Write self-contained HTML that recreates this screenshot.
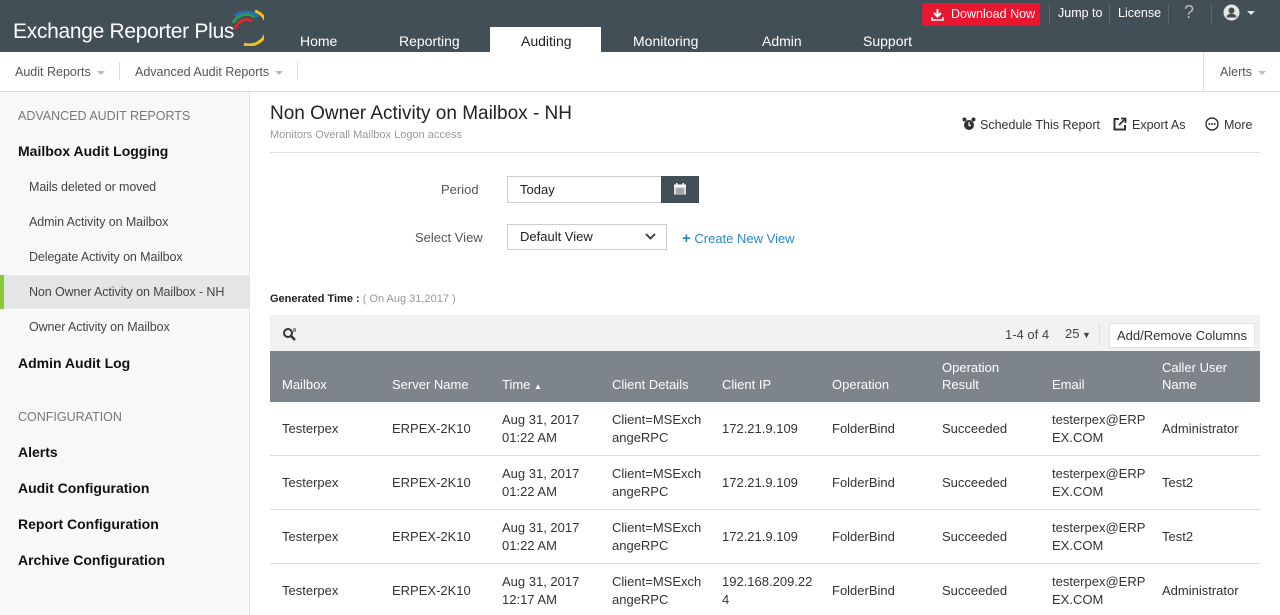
<!DOCTYPE html>
<html><head><meta charset="utf-8"><style>
*{margin:0;padding:0;box-sizing:border-box}
body{width:1280px;height:615px;overflow:hidden;background:#fff;font-family:"Liberation Sans",sans-serif;font-size:13px;color:#333;position:relative}
.a{position:absolute;white-space:nowrap}
#top{position:absolute;left:0;top:0;width:1280px;height:52px;background:#434f57}
.tab{position:absolute;top:33px;color:#fff;font-size:14px}
#sub{position:absolute;left:0;top:52px;width:1280px;height:40px;border-bottom:1px solid #dcdcdc;background:#fff}
#side{position:absolute;left:0;top:92px;width:250px;height:523px;background:#f7f8f8;border-right:1px solid #e3e3e3}
.sh{color:#777;font-size:12.5px}
.sb{color:#111;font-weight:bold;font-size:14px}
.si{color:#444;font-size:12.5px;letter-spacing:-0.1px}
.car{display:inline-block;width:0;height:0;border-left:4px solid transparent;border-right:4px solid transparent;border-top:4px solid #bbb;margin-left:6px;vertical-align:middle}
.th{position:absolute;color:#fff;font-size:13px;line-height:17px}
.td{position:absolute;color:#333;font-size:13px;line-height:18px}
.row{position:absolute;left:270px;width:990px;height:54px;border-bottom:1px solid #dcdcdc}
</style></head><body>
<div id="top"></div>
<div class="a" style="left:13px;top:20px;color:#fff;font-size:21px;letter-spacing:-0.3px">Exchange Reporter Plus</div>
<svg class="a" style="left:222px;top:8px" width="42" height="38" viewBox="0 0 42 38">
<path d="M13 21 A12 12 0 0 1 30 13" stroke="#d9262b" stroke-width="3" fill="none"/>
<path d="M11 15 A15 15 0 0 1 33 9" stroke="#2e9b48" stroke-width="3" fill="none"/>
<path d="M13 8 A17 17 0 0 1 36 9" stroke="#2470b7" stroke-width="3" fill="none"/>
<path d="M33 3 A17 17 0 0 1 22 36" stroke="#f2c31b" stroke-width="3" fill="none"/>
</svg>
<div class="tab" style="left:300px">Home</div>
<div class="tab" style="left:399px">Reporting</div>
<div class="a" style="left:490px;top:27px;width:111px;height:25px;background:#fff"></div>
<div class="tab" style="left:521px;color:#222">Auditing</div>
<div class="tab" style="left:633px">Monitoring</div>
<div class="tab" style="left:762px">Admin</div>
<div class="tab" style="left:863px">Support</div>
<div class="a" style="left:922px;top:3px;width:118px;height:23px;background:#e8162f;color:#fff;font-size:12.5px;line-height:23px;padding-left:29px">Download Now</div>
<svg class="a" style="left:931px;top:8px" width="13" height="13"><path d="M6.5 1v7M3 5l3.5 3.5L10 5" stroke="#fff" stroke-width="2" fill="none"/><path d="M1 9v3h11V9" stroke="#fff" stroke-width="1.6" fill="none"/></svg>
<div class="a" style="left:1049px;top:4px;width:1px;height:20px;background:#5a666e"></div>
<div class="a" style="left:1058px;top:6px;color:#fff;font-size:12.5px">Jump to</div>
<div class="a" style="left:1109px;top:4px;width:1px;height:20px;background:#5a666e"></div>
<div class="a" style="left:1118px;top:6px;color:#fff;font-size:12.5px">License</div>
<div class="a" style="left:1168px;top:4px;width:1px;height:20px;background:#5a666e"></div>
<div class="a" style="left:1184px;top:2px;color:#bbb;font-size:18px">?</div>
<div class="a" style="left:1211px;top:4px;width:1px;height:20px;background:#5a666e"></div>
<svg class="a" style="left:1223px;top:4px" width="34" height="17"><circle cx="8.5" cy="8.5" r="8" fill="#e6e6e6"/><circle cx="8.5" cy="6.5" r="3" fill="#434f57"/><path d="M3.5 13.5a5 4 0 0 1 10 0z" fill="#434f57"/><path d="M24 7h8l-4 4z" fill="#e6e6e6"/></svg>

<div id="sub"></div>
<div class="a" style="left:15px;top:65px;color:#555;font-size:12.5px">Audit Reports<span class="car"></span></div>
<div class="a" style="left:119px;top:62px;width:1px;height:18px;background:#ddd"></div>
<div class="a" style="left:135px;top:65px;color:#555;font-size:12.5px">Advanced Audit Reports<span class="car"></span></div>
<div class="a" style="left:297px;top:62px;width:1px;height:18px;background:#ddd"></div>
<div class="a" style="left:1203px;top:52px;width:1px;height:40px;background:#ddd"></div>
<div class="a" style="left:1220px;top:65px;color:#555;font-size:12.5px">Alerts<span class="car"></span></div>

<div id="side"></div>
<div class="a sh" style="left:18px;top:109px">ADVANCED AUDIT REPORTS</div>
<div class="a sb" style="left:18px;top:143px">Mailbox Audit Logging</div>
<div class="a si" style="left:29px;top:180px">Mails deleted or moved</div>
<div class="a si" style="left:29px;top:215px">Admin Activity on Mailbox</div>
<div class="a si" style="left:29px;top:250px">Delegate Activity on Mailbox</div>
<div class="a" style="left:0;top:275px;width:249px;height:34px;background:#e4e5e6;border-left:4px solid #8cc63f"></div>
<div class="a si" style="left:29px;top:285px">Non Owner Activity on Mailbox - NH</div>
<div class="a si" style="left:29px;top:320px">Owner Activity on Mailbox</div>
<div class="a sb" style="left:18px;top:355px">Admin Audit Log</div>
<div class="a sh" style="left:18px;top:410px">CONFIGURATION</div>
<div class="a sb" style="left:18px;top:444px">Alerts</div>
<div class="a sb" style="left:18px;top:480px">Audit Configuration</div>
<div class="a sb" style="left:18px;top:516px">Report Configuration</div>
<div class="a sb" style="left:18px;top:552px">Archive Configuration</div>

<div class="a" style="left:270px;top:103px;color:#222;font-size:19px">Non Owner Activity on Mailbox - NH</div>
<div class="a" style="left:270px;top:129px;color:#999;font-size:11px">Monitors Overall Mailbox Logon access</div>
<div class="a" style="left:270px;top:152px;width:990px;height:1px;background:#ddd"></div>
<svg class="a" style="left:962px;top:117px" width="14" height="14"><circle cx="7" cy="8" r="5" fill="#333"/><circle cx="2.5" cy="2.5" r="2" fill="#333"/><circle cx="11.5" cy="2.5" r="2" fill="#333"/><path d="M7 5v3.5h2" stroke="#fff" stroke-width="1.2" fill="none"/></svg>
<div class="a" style="left:980px;top:118px;color:#333;font-size:12.5px">Schedule This Report</div>
<svg class="a" style="left:1113px;top:117px" width="14" height="14"><path d="M6 2H1.5v10.5H12V8" stroke="#333" stroke-width="2" fill="none"/><path d="M6 8l6-6M8 1.5h4.5V6" stroke="#333" stroke-width="1.8" fill="none"/></svg>
<div class="a" style="left:1132px;top:118px;color:#333;font-size:12.5px">Export As</div>
<svg class="a" style="left:1205px;top:117px" width="14" height="14"><circle cx="7" cy="7" r="6" stroke="#333" stroke-width="1.4" fill="none"/><circle cx="4.3" cy="7" r="1" fill="#333"/><circle cx="7" cy="7" r="1" fill="#333"/><circle cx="9.7" cy="7" r="1" fill="#333"/></svg>
<div class="a" style="left:1224px;top:118px;color:#333;font-size:12.5px">More</div>

<div class="a" style="left:441px;top:182px;color:#555">Period</div>
<div class="a" style="left:507px;top:176px;width:155px;height:27px;border:1px solid #ccc;padding-left:12px;line-height:25px;color:#222">Today</div>
<div class="a" style="left:661px;top:176px;width:38px;height:27px;background:#434f57"></div>
<svg class="a" style="left:673px;top:182px" width="14" height="14"><rect x="1" y="2.5" width="12" height="10" fill="#ddd"/><rect x="1" y="2.5" width="12" height="2.5" fill="#fff"/><rect x="3" y="1" width="1.5" height="3" fill="#fff"/><rect x="9.5" y="1" width="1.5" height="3" fill="#fff"/><path d="M3 7h8M3 9h8M3 11h8" stroke="#434f57" stroke-width=".7"/></svg>
<div class="a" style="left:415px;top:230px;color:#555">Select View</div>
<div class="a" style="left:507px;top:224px;width:160px;height:26px;border:1px solid #ccc;padding-left:12px;line-height:24px;color:#222">Default View</div>
<svg class="a" style="left:645px;top:233px" width="11" height="8"><path d="M1 1l4.5 4.5L10 1" stroke="#444" stroke-width="2" fill="none"/></svg>
<div class="a" style="left:682px;top:230px;color:#2a87c8"><b style="font-size:15px">+</b> Create New View</div>

<div class="a" style="left:270px;top:293px;font-size:11px;color:#222;font-weight:bold">Generated Time : <span style="font-weight:normal;color:#999">( On Aug 31,2017 )</span></div>
<div class="a" style="left:270px;top:315px;width:990px;height:36px;background:#f1f1f1"></div>
<svg class="a" style="left:282px;top:327px" width="16" height="16"><circle cx="6" cy="6" r="4" stroke="#333" stroke-width="2" fill="none"/><path d="M9 9l4 4" stroke="#333" stroke-width="2.5"/><path d="M11 2h3M11 4h3" stroke="#333" stroke-width="1"/></svg>
<div class="a" style="left:1005px;top:327px;color:#444">1-4 of 4</div>
<div class="a" style="left:1065px;top:326px;color:#444">25<span style="font-size:9px"> ▼</span></div>
<div class="a" style="left:1099px;top:323px;width:1px;height:22px;background:#ddd"></div>
<div class="a" style="left:1109px;top:323px;width:146px;height:25px;background:#fff;border:1px solid #e3e3e3;text-align:center;line-height:23px;color:#333">Add/Remove Columns</div>

<div class="a" style="left:270px;top:351px;width:990px;height:51px;background:#7d858a"></div>
<div class="th" style="left:282px;top:376px">Mailbox</div>
<div class="th" style="left:392px;top:376px">Server Name</div>
<div class="th" style="left:502px;top:376px">Time <span style="font-size:8px">▲</span></div>
<div class="th" style="left:612px;top:376px">Client Details</div>
<div class="th" style="left:722px;top:376px">Client IP</div>
<div class="th" style="left:832px;top:376px">Operation</div>
<div class="th" style="left:942px;top:359px">Operation<br>Result</div>
<div class="th" style="left:1052px;top:376px">Email</div>
<div class="th" style="left:1162px;top:359px">Caller User<br>Name</div>

<div class="row" style="top:402px"></div>
<div class="row" style="top:456px"></div>
<div class="row" style="top:510px"></div>

<div class="td" style="left:282px;top:420px">Testerpex</div><div class="td" style="left:392px;top:420px">ERPEX-2K10</div><div class="td" style="left:502px;top:411px">Aug 31, 2017<br>01:22 AM</div><div class="td" style="left:612px;top:411px">Client=MSExch<br>angeRPC</div><div class="td" style="left:722px;top:420px">172.21.9.109</div><div class="td" style="left:832px;top:420px">FolderBind</div><div class="td" style="left:942px;top:420px">Succeeded</div><div class="td" style="left:1052px;top:411px">testerpex@ERP<br>EX.COM</div><div class="td" style="left:1162px;top:420px">Administrator</div>

<div class="td" style="left:282px;top:474px">Testerpex</div><div class="td" style="left:392px;top:474px">ERPEX-2K10</div><div class="td" style="left:502px;top:465px">Aug 31, 2017<br>01:22 AM</div><div class="td" style="left:612px;top:465px">Client=MSExch<br>angeRPC</div><div class="td" style="left:722px;top:474px">172.21.9.109</div><div class="td" style="left:832px;top:474px">FolderBind</div><div class="td" style="left:942px;top:474px">Succeeded</div><div class="td" style="left:1052px;top:465px">testerpex@ERP<br>EX.COM</div><div class="td" style="left:1162px;top:474px">Test2</div>

<div class="td" style="left:282px;top:528px">Testerpex</div><div class="td" style="left:392px;top:528px">ERPEX-2K10</div><div class="td" style="left:502px;top:519px">Aug 31, 2017<br>01:22 AM</div><div class="td" style="left:612px;top:519px">Client=MSExch<br>angeRPC</div><div class="td" style="left:722px;top:528px">172.21.9.109</div><div class="td" style="left:832px;top:528px">FolderBind</div><div class="td" style="left:942px;top:528px">Succeeded</div><div class="td" style="left:1052px;top:519px">testerpex@ERP<br>EX.COM</div><div class="td" style="left:1162px;top:528px">Test2</div>

<div class="td" style="left:282px;top:582px">Testerpex</div><div class="td" style="left:392px;top:582px">ERPEX-2K10</div><div class="td" style="left:502px;top:573px">Aug 31, 2017<br>12:17 AM</div><div class="td" style="left:612px;top:573px">Client=MSExch<br>angeRPC</div><div class="td" style="left:722px;top:573px">192.168.209.22<br>4</div><div class="td" style="left:832px;top:582px">FolderBind</div><div class="td" style="left:942px;top:582px">Succeeded</div><div class="td" style="left:1052px;top:573px">testerpex@ERP<br>EX.COM</div><div class="td" style="left:1162px;top:582px">Administrator</div>
</body></html>
